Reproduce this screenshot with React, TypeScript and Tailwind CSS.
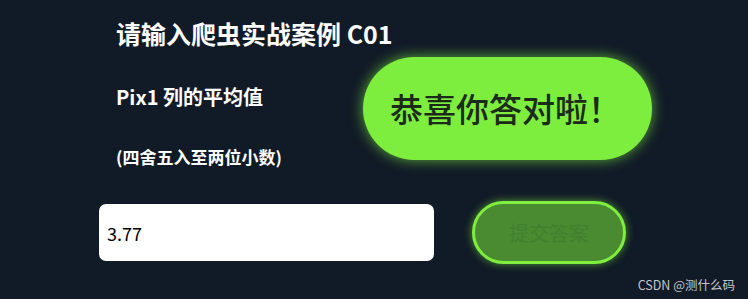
export default function App() {
  const font = { fontFamily: '"Noto Sans CJK SC", "Noto Sans", sans-serif' }

  return (
    <div className="relative h-[299px] w-full overflow-hidden bg-[#111a27]" style={font}>
      <div className="flex flex-col pl-[99px]">
        <h1 className="pl-[17px] pt-[16px] text-[25px] leading-[34px] font-bold text-white">
          请输入爬虫实战案例 C01
        </h1>
        <h2 className="mt-[32px] pl-[17px] text-[20px] leading-[30px] font-bold text-white">
          Pix1 列的平均值
        </h2>
        <p className="mt-[33px] pl-[17px] text-[17px] leading-[24px] font-bold text-white">
          (四舍五入至两位小数)
        </p>

        <div className="mt-[32px] flex items-center gap-[38px]">
          <input
            defaultValue="3.77"
            className="h-[57px] w-[335px] rounded-[7px] bg-white px-[8px] text-[18px] text-black outline-none"
            style={font}
          />
          <button className="flex h-[63px] w-[154px] items-center justify-center rounded-full border-[3px] border-[#7fee3f] bg-[#4a8a30] text-[20px] text-[#428030] shadow-[0_0_8px_rgba(127,238,63,0.6)]">
            提交答案
          </button>
        </div>
      </div>

      {/* toast */}
      <div className="absolute left-[363px] top-[57px] flex h-[103px] w-[289px] items-center rounded-full bg-[#7ded3e] pl-[27px] text-[33px] font-medium text-[#1c2a1a] shadow-[0_0_14px_rgba(125,237,62,0.7)]">
        恭喜你答对啦！
      </div>

      <div className="absolute bottom-[6px] right-[13px] text-[12.5px] leading-[16px] text-[#c4c6ca]">
        CSDN @测什么码
      </div>
    </div>
  )
}
